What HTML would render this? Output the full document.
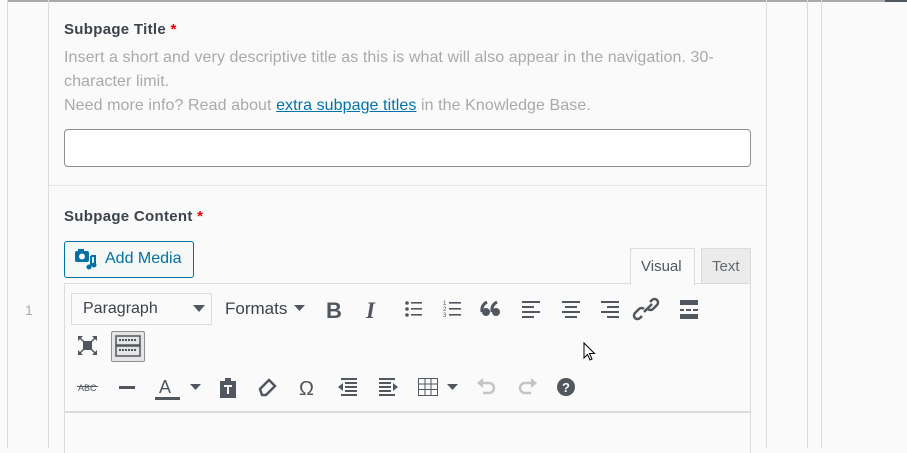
<!DOCTYPE html>
<html><head><meta charset="utf-8"><style>
*{margin:0;padding:0;box-sizing:border-box}
body{width:907px;height:448px;background:#fafafa;position:relative;overflow:hidden;font-family:"Liberation Sans",sans-serif}
.a{position:absolute}
.vl{position:absolute;top:0;height:448px;width:1px;background:#dcdcde}
.t{position:absolute;white-space:nowrap}
.lbl{font-weight:bold;font-size:15px;color:#3c434a;letter-spacing:0.3px}
.lbl span{color:#e00}
.desc{font-size:16px;color:#a7aaad;line-height:24px;letter-spacing:0.08px}
.desc a{color:#0073aa;text-decoration:underline}
</style></head><body>
<div class="a" style="left:8px;top:0;width:877px;height:2px;background:#a7aaad"></div>
<div class="a" style="left:885px;top:0;width:22px;height:2px;background:#50575e"></div>
<div class="vl" style="left:7px"></div>
<div class="vl" style="left:48px"></div>
<div class="vl" style="left:766px"></div>
<div class="vl" style="left:807px"></div>
<div class="vl" style="left:821px"></div>

<div class="t lbl" style="left:64px;top:21px">Subpage Title <span>*</span></div>
<div class="t desc" style="left:64px;top:46px">Insert a short and very descriptive title as this is what will also appear in the navigation. 30-</div>
<div class="t desc" style="left:64px;top:70px">character limit.</div>
<div class="t desc" style="left:64px;top:94px">Need more info? Read about <a>extra subpage titles</a> in the Knowledge Base.</div>
<div class="a" style="left:64px;top:129px;width:687px;height:38px;border:1px solid #8c8f94;border-radius:4px;background:#fff"></div>
<div class="a" style="left:49px;top:185px;width:717px;height:1px;background:#e5e5e5"></div>

<div class="t lbl" style="left:64px;top:208px">Subpage Content <span>*</span></div>

<div class="a" style="left:64px;top:241px;width:130px;height:37px;border:1px solid #0071a1;border-radius:3px;background:#f6f7f7"></div>
<div class="t" style="left:105px;top:250px;font-size:16px;color:#0071a1">Add Media</div>
<svg class="a" style="left:74px;top:249px" width="24" height="22" viewBox="0 0 24 22"><rect x="1" y="2" width="14" height="11" rx="2" fill="#0071a1"/><rect x="4" y="0" width="6" height="3" fill="#0071a1"/><circle cx="8" cy="7.5" r="3" fill="#f6f7f7"/><path d="M17 7v10M17 7h4v8" stroke="#0071a1" stroke-width="2" fill="none"/><circle cx="15" cy="18" r="2.5" fill="#0071a1"/><circle cx="20" cy="16" r="2.5" fill="#0071a1"/></svg>

<div class="a" style="left:630px;top:248px;width:65px;height:37px;border:1px solid #dcdcde;border-bottom:none;background:#fafafa;z-index:2"></div>
<div class="t" style="left:641px;top:258px;font-size:15px;color:#50575e;z-index:3">Visual</div>
<div class="a" style="left:701px;top:248px;width:50px;height:36px;border:1px solid #dcdcde;background:#ebebeb"></div>
<div class="t" style="left:712px;top:258px;font-size:15px;color:#646970">Text</div>

<div class="a" style="left:64px;top:283px;width:687px;height:170px;border:1px solid #dcdcde;background:#fafafa;z-index:1"></div>
<div class="a" style="left:65px;top:411px;width:685px;height:2px;background:#dcdcde;z-index:2"></div>
<div class="a" style="left:65px;top:413px;width:685px;height:40px;background:#fafafa;z-index:2"></div>

<div class="t" style="left:25px;top:302px;font-size:14px;color:#a7aaad">1</div>

<div class="a" style="left:71px;top:293px;width:141px;height:32px;border:1px solid #dcdcde;background:#fafafa;z-index:3"></div>
<div class="t" style="left:83px;top:300px;font-size:16px;color:#3c434a;z-index:4">Paragraph</div>
<div class="t" style="left:225px;top:299px;font-size:17px;color:#3c434a;z-index:4">Formats</div>
<div class="a" style="left:111px;top:331px;width:34px;height:31px;border:1px solid #8c8f94;border-radius:2px;background:#e5e5e5;z-index:3"></div>

<svg class="a" style="left:0;top:0;z-index:5" width="907" height="448">
<g fill="#50575e">
<path d="M193 305h12l-6 7z"/><path d="M294 305h11l-5.5 6z"/>
<text x="326" y="318" font-family="Liberation Sans" font-weight="bold" font-size="22">B</text>
<text x="366" y="318" font-family="Liberation Serif" font-style="italic" font-weight="bold" font-size="23">I</text>
<circle cx="407" cy="303" r="1.8"/><circle cx="407" cy="309" r="1.8"/><circle cx="407" cy="315" r="1.8"/>
<rect x="411" y="302" width="11" height="1.6"/><rect x="411" y="308" width="11" height="1.6"/><rect x="411" y="314" width="11" height="1.6"/>
<text x="443" y="305" font-size="6" font-family="Liberation Sans">1</text><text x="443" y="311" font-size="6" font-family="Liberation Sans">2</text><text x="443" y="317" font-size="6" font-family="Liberation Sans">3</text>
<rect x="449" y="302" width="12" height="1.6"/><rect x="449" y="308" width="12" height="1.6"/><rect x="449" y="314" width="12" height="1.6"/>
<circle cx="486" cy="312" r="4"/><circle cx="496" cy="312" r="4"/>
<path d="M487 302q-6 3-5 10M497 302q-6 3-5 10" fill="none" stroke="#50575e" stroke-width="3"/>
<rect x="522" y="301" width="18" height="2"/><rect x="522" y="306" width="12" height="2"/><rect x="522" y="311" width="18" height="2"/><rect x="522" y="316" width="12" height="2"/>
<rect x="562" y="301" width="18" height="2"/><rect x="565" y="306" width="12" height="2"/><rect x="562" y="311" width="18" height="2"/><rect x="565" y="316" width="12" height="2"/>
<rect x="601" y="301" width="18" height="2"/><rect x="607" y="306" width="12" height="2"/><rect x="601" y="311" width="18" height="2"/><rect x="607" y="316" width="12" height="2"/>
<rect x="680" y="300" width="18" height="5"/><rect x="680" y="314" width="18" height="5"/><rect x="680" y="309" width="4" height="2"/><rect x="686" y="309" width="5" height="2"/><rect x="693" y="309" width="5" height="2"/>
<rect x="83" y="341" width="9" height="9"/>
<path d="M78 336h5l-5 5zM97 336h-5l5 5zM78 355h5l-5-5zM97 355h-5l5-5z"/>
<path d="M80 338l4 4M95 338l-4 4M80 353l4-4M95 353l-4-4" stroke="#50575e" stroke-width="1.5"/>
<rect x="116" y="336" width="24" height="9" fill="none" stroke="#50575e" stroke-width="1.5"/><rect x="116" y="346" width="24" height="10" fill="none" stroke="#50575e" stroke-width="1.5"/>
<path d="M119 340h18M119 350h18" stroke="#50575e" stroke-width="2" stroke-dasharray="2 1"/>
<text x="78" y="391" font-size="9" font-family="Liberation Sans">ABC</text><rect x="77" y="386" width="21" height="1"/>
<rect x="119" y="386" width="16" height="3"/>
<text x="159" y="393" font-size="18" font-family="Liberation Sans">A</text><rect x="155" y="397" width="25" height="3"/>
<path d="M190 384h11l-5.5 6z"/>
<path d="M220 381h5v-3h6v3h5v17h-16z"/><path d="M224 385h8v2h-3v7h-2v-7h-3z" fill="#fafafa"/>
<path d="M260 389l9-9 6 6-9 9h-4z" fill="none" stroke="#50575e" stroke-width="2.5"/>
<text x="299" y="395" font-size="20" font-family="Liberation Sans">Ω</text>
<rect x="341" y="378" width="16" height="2"/><rect x="345" y="382" width="12" height="2"/><rect x="345" y="386" width="12" height="2"/><rect x="345" y="390" width="12" height="2"/><rect x="341" y="394" width="16" height="2"/><path d="M338 387l5-4v8z"/>
<rect x="379" y="378" width="16" height="2"/><rect x="379" y="382" width="12" height="2"/><rect x="379" y="386" width="12" height="2"/><rect x="379" y="390" width="12" height="2"/><rect x="379" y="394" width="16" height="2"/><path d="M398 387l-5-4v8z"/>
<path d="M418.5 378.5h19v17h-19zM418.5 384h19M418.5 389.5h19M425 378.5v17M431 378.5v17" fill="none" stroke="#50575e"/>
<path d="M447 384h11l-5.5 6z"/>
<circle cx="566" cy="387" r="9"/>
</g>
<text x="562" y="392" font-size="13" font-weight="bold" font-family="Liberation Sans" fill="#fafafa">?</text>
<path d="M642 316l-2 2a3.5 3.5 0 01-5-5l4-4a3.5 3.5 0 015 0M650 302l2-2a3.5 3.5 0 015 5l-4 4a3.5 3.5 0 01-5 0M644 312l8-8" fill="none" stroke="#50575e" stroke-width="2.5"/>
<path d="M479 383h10a5 5 0 010 10h-6" fill="none" stroke="#c3c4c7" stroke-width="2.5"/><path d="M477 383l6-5v10z" fill="#c3c4c7"/>
<path d="M535 383h-10a5 5 0 000 10h6" fill="none" stroke="#c3c4c7" stroke-width="2.5"/><path d="M537 383l-6-5v10z" fill="#c3c4c7"/>
<path d="M584 343v15l3.5-3.5 2.5 5.5 2-1-2.5-5.5h5z" fill="#fff" stroke="#000" stroke-width="1"/>
</svg>
</body></html>
